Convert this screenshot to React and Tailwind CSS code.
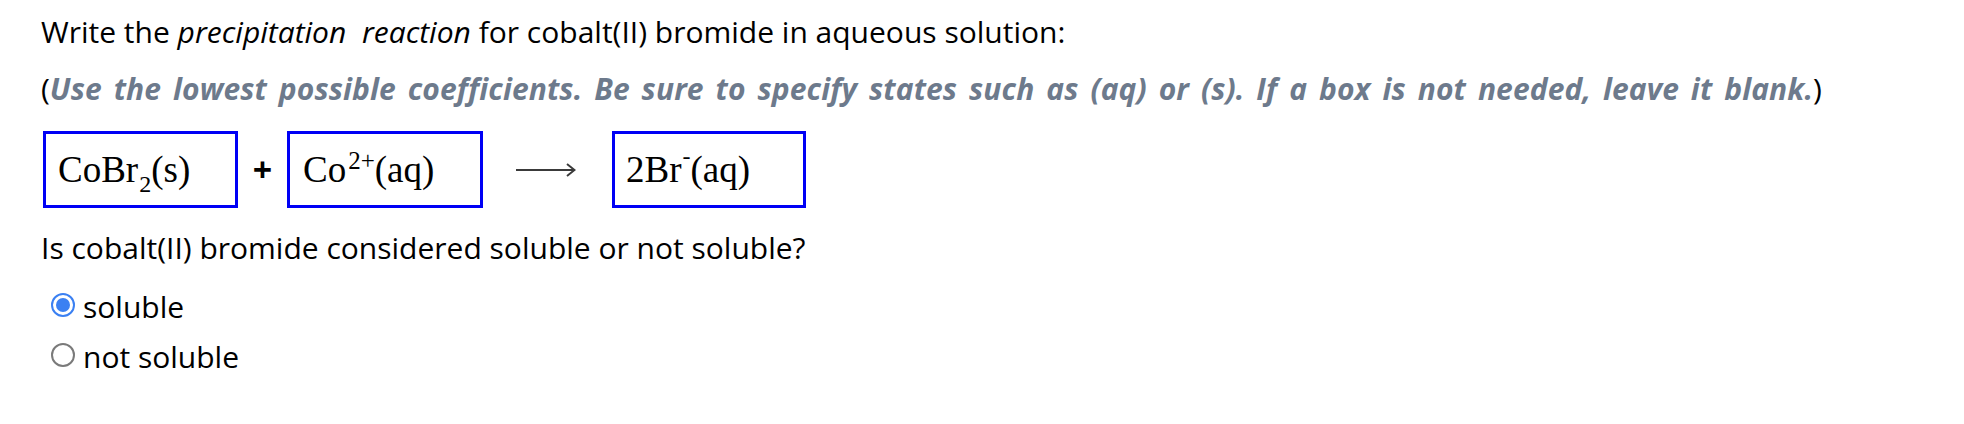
export default function App() {
  const sans = { fontFamily: '"Open Sans", "Noto Sans", sans-serif' };
  return (
    <div className="bg-white w-[1964px] h-[424px] pt-[9px] pl-[41px] text-black" style={sans}>
      <p className="text-[30px] leading-[45px] font-normal">
        Write the <i>precipitation</i> <i>&nbsp;reaction</i> for cobalt(II) bromide in aqueous solution:
      </p>
      <p className="mt-[12px] text-[30px] leading-[45px]">
        (<span className="font-bold italic text-[#6d7a8c] tracking-[0.1px] [word-spacing:4px]">Use the lowest possible coefficients. Be sure to specify states such as (aq) or (s). If a box is not needed, leave it blank.</span>)
      </p>
      <div className="mt-[20px] flex items-center h-[77px]" style={{ fontFamily: '"Liberation Serif", "Times New Roman", serif' }}>
        <div className="ml-[2px] w-[195px] h-[77px] border-[3px] border-[#0000f5] flex items-center pl-[12px] text-[37px] leading-none">
          <span>CoBr<span className="text-[24px] relative top-[10px] ml-[1px]">2</span>(s)</span>
        </div>
        <div className="w-[49px] flex justify-center text-[34px] font-bold" style={sans}>+</div>
        <div className="w-[196px] h-[77px] border-[3px] border-[#0000f5] flex items-center pl-[13px] text-[37px] leading-none">
          <span>Co<span className="text-[25px] relative -top-[13px] ml-[2px]">2+</span>(aq)</span>
        </div>
        <div className="w-[129px] flex items-center pl-[33px]">
          <svg width="60" height="16" viewBox="0 0 60 16" className="text-[#3a3a3a]">
            <line x1="0" y1="8" x2="58" y2="8" stroke="currentColor" strokeWidth="2" />
            <polyline points="51,2 58.5,8 51,14" fill="none" stroke="currentColor" strokeWidth="2" />
          </svg>
        </div>
        <div className="w-[194px] h-[77px] border-[3px] border-[#0000f5] flex items-center pl-[11px] text-[37px] leading-none">
          <span>2Br<span className="text-[24px] relative -top-[18px] ml-[1px]">-</span>(aq)</span>
        </div>
      </div>
      <p className="mt-[17px] text-[30px] leading-[45px]">Is cobalt(II) bromide considered soluble or not soluble?</p>
      <div className="mt-[14px] flex flex-col gap-[5px]">
        <label className="flex items-center h-[45px] text-[30px] leading-[45px]">
          <span className="ml-[10px] w-[24px] h-[24px] rounded-full border-[2px] border-[#3b80f2] flex items-center justify-center -mt-[3px]">
            <span className="w-[14px] h-[14px] rounded-full bg-[#3b80f2]"></span>
          </span>
          <span className="ml-[8px]">soluble</span>
        </label>
        <label className="flex items-center h-[45px] text-[30px] leading-[45px]">
          <span className="ml-[10px] w-[24px] h-[24px] rounded-full border-[2px] border-[#7a7a7a] -mt-[3px]"></span>
          <span className="ml-[8px]">not soluble</span>
        </label>
      </div>
    </div>
  );
}
